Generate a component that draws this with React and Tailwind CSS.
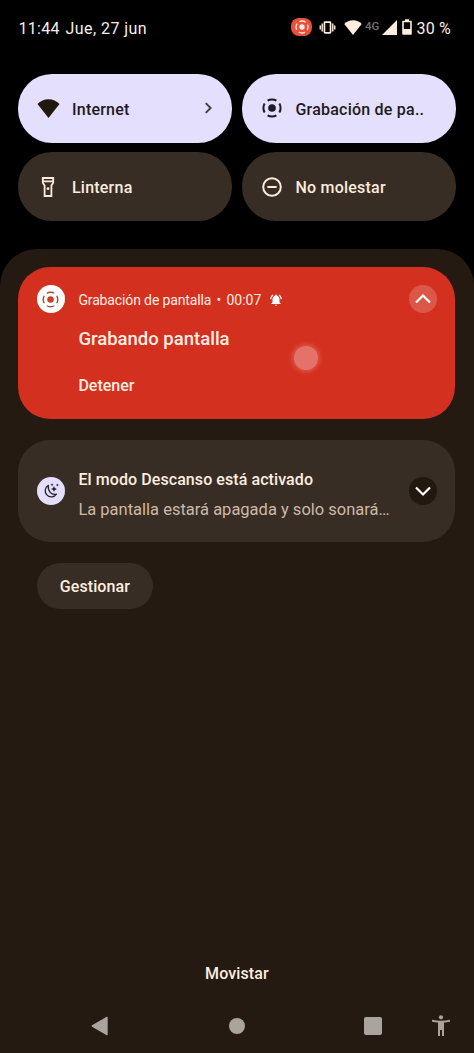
import React from "react";

function RecordIcon({ className, strokeWidth = 2.2, dotClass = "" }) {
  return (
    <svg viewBox="0 0 24 24" className={className} fill="none" stroke="currentColor" strokeWidth={strokeWidth}>
      <circle cx="12" cy="12" r="4.6" fill="currentColor" stroke="none" className={dotClass} />
      <circle cx="12" cy="12" r="10.300" pathLength="360" strokeDasharray="62 28" strokeDashoffset="31" />
    </svg>
  );
}

function WifiIcon({ className }) {
  return (
    <svg viewBox="0 0 24 20" className={className} fill="currentColor">
      <path d="M12 20 .4 5.2C3.500 2 7.500.3 12 .3S20.500 2 23.600 5.200Z" />
    </svg>
  );
}

function VibrateIcon({ className }) {
  return (
    <svg viewBox="0 0 18 14" className={className} fill="none" stroke="currentColor">
      <rect x="5.700" y="1.300" width="6.600" height="11.400" rx=".7" strokeWidth="1.800" />
      <path d="M3.300 2.800v8.400M14.700 2.800v8.400M1.200 4.800v4.400M16.800 4.800v4.400" strokeWidth="1.500" />
    </svg>
  );
}

function BatteryIcon({ className }) {
  return (
    <svg viewBox="0 0 10 16" className={className} fill="none" stroke="currentColor">
      <path d="M1 2.500h8v12.500H1Z" strokeWidth="1.600" strokeLinejoin="round" />
      <path d="M3 .2h4v2H3ZM1 10h8V15H1Z" fill="currentColor" stroke="none" />
    </svg>
  );
}

function TorchIcon({ className }) {
  return (
    <svg viewBox="0 0 14 20" className={className} fill="none" stroke="currentColor" strokeWidth="1.800">
      <path d="M1.800 1h10.400v4.700L10.400 8.500V19H3.600V8.500L1.800 5.700ZM1.800 4.400h10.400" />
      <circle cx="7" cy="11.700" r="1.400" fill="currentColor" stroke="none" />
    </svg>
  );
}

function BellIcon({ className }) {
  return (
    <svg viewBox="0 0 24 24" className={className} fill="currentColor">
      <path d="M7.580 4.080 6.150 2.650C3.750 4.480 2.170 7.300 2.030 10.500h2c.150-2.650 1.510-4.970 3.550-6.420zm12.390 6.420h2c-.150-3.200-1.730-6.020-4.120-7.850l-1.420 1.430c2.020 1.450 3.390 3.770 3.540 6.420zM18 11c0-3.070-1.640-5.640-4.500-6.320V4c0-.83-.67-1.500-1.500-1.500s-1.500.67-1.500 1.500v.68C7.630 5.360 6 7.920 6 11v5l-2 2v1h16v-1l-2-2v-5zm-6 11c1.100 0 2-.9 2-2h-4c0 1.100.9 2 2 2z" />
    </svg>
  );
}

function MoonIcon({ className }) {
  return (
    <svg viewBox="0 0 16 16" className={className}>
      <path d="M5.400 2.400A6.100 6.100 0 1 0 13.400 11.100Q9.500 12 7.200 9.300 4.700 6.200 5.400 2.400Z" fill="none" stroke="currentColor" strokeWidth="1.300" strokeLinejoin="round" />
      <path d="m11 3 .9 2.100 2.100.9-2.100.9-.9 2.100-.9-2.100-2.100-.9 2.100-.9ZM9 .2l.5 1 1 .5-1 .5-.5 1-.5-1-1-.5 1-.5ZM14.300.4l.5 1 1 .5-1 .5-.5 1-.5-1-1-.5 1-.5Z" fill="currentColor" />
    </svg>
  );
}

function Chevron({ d, className, strokeWidth = 2 }) {
  return (
    <svg viewBox="0 0 16 16" className={className} fill="none" stroke="currentColor" strokeWidth={strokeWidth}>
      <path d={d} strokeLinejoin="miter" />
    </svg>
  );
}

function StatusBar() {
  return (
    <header className="flex h-[57px] items-center pl-[18.500px] pr-[21.500px] text-base leading-none text-[#f6efe9]">
      <span className="w-[47px] whitespace-nowrap tracking-[0.300px]">11:44</span>
      <span className="whitespace-nowrap tracking-[0.450px]">Jue, 27 jun</span>
      <div className="ml-auto flex items-center text-[#fdeee0]">
        <span className="mb-[3px] flex h-[18px] w-[21px] items-center justify-center rounded-[8px] bg-[#ea4f3b]">
          <RecordIcon className="size-[14px]" strokeWidth={2.2} />
        </span>
        <VibrateIcon className="mb-[3px] ml-[7px] h-[13px] w-[17px]" />
        <WifiIcon className="mb-[3px] ml-[7.500px] h-[15px] w-[18px]" />
        <span className="mb-[4px] ml-[3.500px] w-[17px] text-[11.500px] font-medium text-[#77716c]">4G</span>
        <svg viewBox="0 0 15 15" className="mb-[3px] size-[15px]" fill="currentColor">
          <path d="M15 0v15H0Z" />
        </svg>
        <BatteryIcon className="mb-[3px] ml-[5px] h-4 w-[10px]" />
        <span className="ml-[4.500px] w-[36px] whitespace-nowrap tracking-[0.200px]">30 %</span>
      </div>
    </header>
  );
}

function Tile({ active, icon, label, arrow }) {
  return (
    <button
      className={
        "flex h-[69px] items-center rounded-[34px] pl-[18px] pr-[18px] text-left text-base font-medium tracking-[0.220px] " +
        (active ? "bg-[#e4dffd] text-[#1e1a22]" : "bg-[#382d24] text-[#fbebdd]")
      }
    >
      <span className="mr-[12px] flex w-[24px] shrink-0 justify-center">{icon}</span>
      <span className="flex-1 whitespace-nowrap pt-[3px]">{label}</span>
      {arrow && <Chevron className="size-3 text-[#463e3c]" d="M5 1.500 11.500 8 5 14.500" strokeWidth={2.6} />}
    </button>
  );
}

export default function App() {
  return (
    <div className="flex h-[1053px] w-[474px] flex-col overflow-hidden bg-black font-['Roboto',sans-serif]">
      <StatusBar />
      <div className="mt-[16.500px] grid grid-cols-2 gap-x-[9.500px] gap-y-[9.500px] pl-[18px] pr-[18.500px]">
        <Tile active arrow label="Internet" icon={<WifiIcon className="h-[19px] w-[23px] text-[#21190f]" />} />
        <Tile active label="Grabación de pa.." icon={<RecordIcon className="size-5" strokeWidth={2.4} />} />
        <Tile label="Linterna" icon={<TorchIcon className="h-[20px] w-[14px]" />} />
        <Tile
          label="No molestar"
          icon={
            <svg viewBox="0 0 20 20" className="size-5" fill="none" stroke="currentColor" strokeWidth="2">
              <circle cx="10" cy="10" r="8.800" />
              <path d="M5.300 10h9.400" />
            </svg>
          }
        />
      </div>

      <main className="mt-[28px] flex flex-1 flex-col rounded-t-[37px] bg-[#241a12] pl-[18.400px] pr-[18.600px] pt-[18px]">
        <section className="relative flex h-[152px] shrink-0 rounded-[32px] bg-[#d4301f] pl-[18.500px] pr-[18px] pt-[18px] text-[#ffeee2]">
          <span className="flex size-7 shrink-0 items-center justify-center rounded-full bg-white text-[#93513a]">
            <RecordIcon className="size-[17px]" strokeWidth={2} dotClass="text-[#c8402a]" />
          </span>
          <div className="ml-[13.500px] flex flex-1 flex-col">
            <div className="flex h-7 items-center pt-[2px] text-sm">
              <span className="w-[133px] whitespace-nowrap tracking-[-0.130px]">Grabación de pantalla</span>
              <span className="w-[15px] text-center">•</span>
              <span className="w-[43px] whitespace-nowrap">00:07</span>
              <BellIcon className="size-[14px] text-white" />
            </div>
            <h2 className="mt-[12px] whitespace-nowrap text-[18.500px] font-medium leading-7">Grabando pantalla</h2>
            <button className="mt-[21px] self-start text-base font-medium leading-6">Detener</button>
          </div>
          <button className="flex size-7 items-center justify-center rounded-full bg-[#db5748] text-white">
            <Chevron className="size-4" d="M1 11.500 8 4.500l7 7" strokeWidth={2.2} />
          </button>
          <span className="absolute left-[275.500px] top-[79px] size-6 rounded-full bg-[#e5716b] shadow-[0_0_4px_2px_rgba(235,130,125,0.450)]" />
        </section>

        <section className="mt-[21px] flex h-[102px] shrink-0 items-center rounded-[32px] bg-[#382d24] pl-[18.500px] pr-[18px]">
          <span className="flex size-7 shrink-0 items-center justify-center rounded-full bg-[#e4dffd] text-[#29232b]">
            <MoonIcon className="size-4" />
          </span>
          <div className="ml-[13.500px] min-w-0 flex-1 whitespace-nowrap pt-[8px]">
            <h2 className="text-base font-medium leading-[30px] tracking-[0.080px] text-[#fdeee0]">El modo Descanso está activado</h2>
            <p className="text-[16.500px] leading-[30px] text-[#cdb9a8]">La pantalla estará apagada y solo sonará…</p>
          </div>
          <button className="flex size-7 items-center justify-center rounded-full bg-[#21180f] text-white">
            <Chevron className="size-4" d="M1 4.500 8 11.500l7-7" strokeWidth={2.200} />
          </button>
        </section>

        <button className="ml-[18.500px] mt-[21px] h-[46px] w-[116px] shrink-0 rounded-[23px] bg-[#382d24] pt-px text-base font-medium tracking-[0.080px] text-[#fdeee0]">
          Gestionar
        </button>

        <div className="mt-auto text-center text-base font-medium leading-6 tracking-[0.100px] text-[#fdeee0]">Movistar</div>
        <nav className="mt-[12px] flex h-[55px] items-center pl-[72.500px] text-[#aaa49e]">
          <svg viewBox="0 0 17 20" className="h-5 w-[17px]" fill="currentColor">
            <path d="M15.700.8Q16.700.3 16.700 1.400v17.200q0 1.100-1 .6L1 10.700q-1-.7 0-1.400Z" />
          </svg>
          <span className="ml-[121px] size-4 rounded-full bg-current" />
          <span className="ml-[119.500px] size-[18px] rounded-[2px] bg-current" />
          <svg viewBox="0 0 18 21" className="ml-[50px] h-[21px] w-[18px]" fill="currentColor">
            <circle cx="9" cy="2.300" r="2.100" />
            <path d="M0 4.700Q9 7 18 4.700v2Q15 7.400 12 7.600V21h-2v-6H8v6H6V7.600Q3 7.400 0 6.700Z" />
          </svg>
        </nav>
      </main>
    </div>
  );
}
